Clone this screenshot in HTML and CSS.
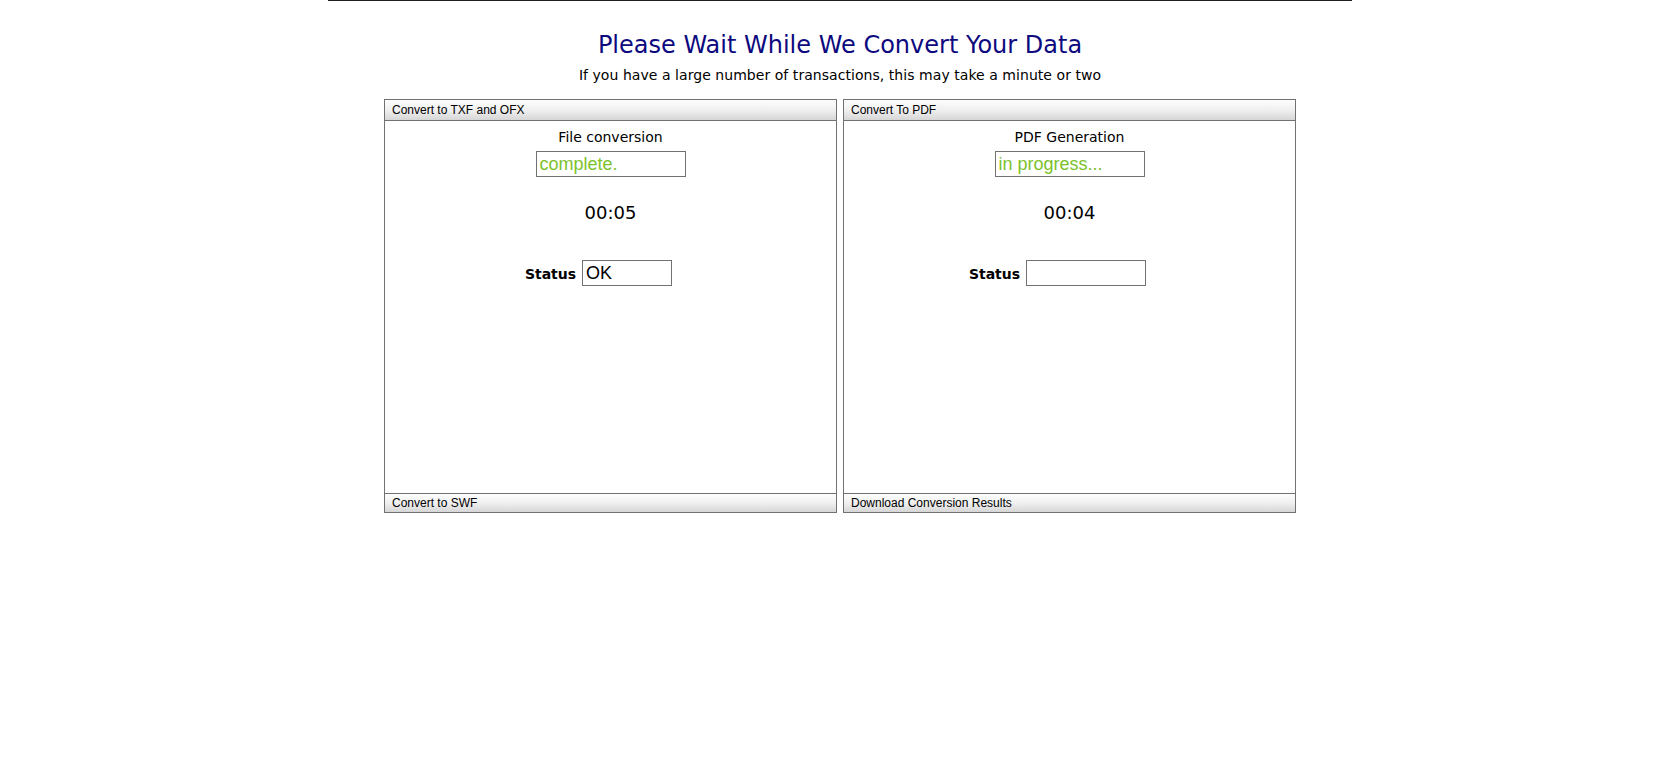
FILE: index.html
```html
<!DOCTYPE html>
<html>
<head>
<meta charset="utf-8">
<title>Please Wait</title>
<link rel="stylesheet" href="styles.css">
</head>
<body>
<hr class="top-rule">
<h1 class="title">Please Wait While We Convert Your Data</h1>
<p class="subtitle">If you have a large number of transactions, this may take a minute or two</p>
<div class="panels">
  <div class="panel">
    <div class="panel-head">Convert to TXF and OFX</div>
    <div class="panel-body">
      <div class="label">File conversion</div>
      <div class="progress-row"><span class="field progress">complete.</span></div>
      <div class="timer">00:05</div>
      <div class="status-row"><span class="status-label">Status</span><span class="field status status-short">OK</span></div>
    </div>
    <div class="panel-foot">Convert to SWF</div>
  </div>
  <div class="panel">
    <div class="panel-head">Convert To PDF</div>
    <div class="panel-body">
      <div class="label">PDF Generation</div>
      <div class="progress-row"><span class="field progress">in progress...</span></div>
      <div class="timer">00:04</div>
      <div class="status-row"><span class="status-label">Status</span><span class="field status status-long">&nbsp;</span></div>
    </div>
    <div class="panel-foot">Download Conversion Results</div>
  </div>
</div>
</body>
</html>
```
FILE: styles.css
```css
html, body {
  margin: 0;
  padding: 0;
  background: #ffffff;
}
body {
  font-family: "DejaVu Sans", Verdana, sans-serif;
  color: #000;
}
.top-rule {
  width: 1024px;
  margin: 0 auto;
  border: 0;
  border-top: 1px solid #1e1e1e;
  height: 0;
}
.title {
  margin: 30px 0 0;
  font-size: 24px;
  line-height: 28px;
  font-weight: normal;
  color: #0d0a80;
  text-align: center;
}
.subtitle {
  margin: 8px 0 0;
  font-size: 14px;
  line-height: 17px;
  letter-spacing: 0.05px;
  text-align: center;
}
.panels {
  width: 912px;
  margin: 15px auto 0;
  display: grid;
  grid-template-columns: 453px 453px;
  column-gap: 6px;
}
.panel {
  border: 1px solid #717171;
  display: flex;
  flex-direction: column;
}
.panel-head, .panel-foot {
  font-family: "Liberation Sans", Arial, sans-serif;
  font-size: 12px;
  padding-left: 7px;
  background: linear-gradient(#fdfdfd, #f0f0f0 50%, #d6d6d6);
}
.panel-head {
  height: 20px;
  line-height: 20px;
  border-bottom: 1px solid #717171;
}
.panel-foot {
  height: 18px;
  line-height: 18px;
  border-top: 1px solid #717171;
}
.panel-body {
  height: 372px;
  box-sizing: border-box;
  padding-top: 8px;
  display: flex;
  flex-direction: column;
  align-items: center;
}
.label {
  font-size: 14px;
  line-height: 17px;
}
.progress-row {
  margin-top: 5px;
}
.field {
  display: inline-block;
  box-sizing: border-box;
  height: 26px;
  border: 1px solid #717171;
  font-family: "Liberation Sans", Arial, sans-serif;
  font-size: 18px;
  line-height: 24px;
  padding-left: 3px;
  vertical-align: baseline;
}
.progress {
  width: 150px;
  color: #7cc22c;
}
.timer {
  margin-top: 25px;
  font-size: 18px;
  line-height: 22px;
}
.status-row {
  margin-top: 36px;
  padding-right: 24px;
  display: flex;
  align-items: baseline;
  gap: 6px;
}
.status-label {
  font-size: 14px;
  font-weight: bold;
}
.status {
  color: #000;
}
.status-short {
  width: 90px;
}
.status-long {
  width: 120px;
}
```
